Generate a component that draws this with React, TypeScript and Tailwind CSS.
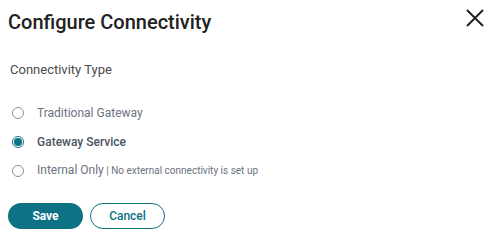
import React, { useState } from "react";

const options = [
  { id: "traditional", label: "Traditional Gateway" },
  { id: "service", label: "Gateway Service" },
  { id: "internal", label: "Internal Only", note: "No external connectivity is set up" },
];

const Radio: React.FC<{ checked: boolean }> = ({ checked }) => (
  <span
    className={`flex h-[12px] w-[12px] shrink-0 items-center justify-center rounded-full border ${
      checked ? "border-[#0e7285]" : "border-[#8a8f96]"
    }`}
  >
    {checked && <span className="h-[8px] w-[8px] rounded-full bg-[#0e7285]" />}
  </span>
);

const App: React.FC = () => {
  const [selected, setSelected] = useState("service");

  return (
    <div className="h-[236px] w-[500px] bg-white font-['Roboto',sans-serif]">
      {/* Header */}
      <div className="flex items-start justify-between pl-[8px] pr-[14px] pt-[9px]">
        <h1 className="text-[20px] font-medium leading-[26px] text-[#222222]">Configure Connectivity</h1>
        <button className="mt-[-2px] text-[#222222]">
          <svg width="22" height="22" viewBox="0 0 22 22" fill="none" stroke="currentColor" strokeWidth={2}>
            <path d="M3 3L19 19M19 3L3 19" />
          </svg>
        </button>
      </div>

      {/* Connectivity type */}
      <div className="pl-[10px] pt-[27px] text-[13px] leading-[16px] text-[#4a4a4a]">Connectivity Type</div>

      <div className="mt-[26px] flex flex-col gap-[12px] pl-[12px]">
        {options.map((opt) => (
          <label
            key={opt.id}
            className="flex h-[17px] cursor-pointer items-center gap-[13px]"
            onClick={() => setSelected(opt.id)}
          >
            <Radio checked={selected === opt.id} />
            <span
              className={`text-[12px] leading-[16px] ${
                selected === opt.id ? "font-medium text-[#4b5563]" : "text-[#6b7280]"
              }`}
            >
              {opt.label}
              {opt.note && <span className="text-[10px] text-[#6b7280]"> | {opt.note}</span>}
            </span>
          </label>
        ))}
      </div>

      {/* Actions */}
      <div className="mt-[24px] flex gap-[7px] pl-[8px]">
        <button className="h-[26px] w-[75px] rounded-full bg-[#0e7285] text-[12px] font-bold text-white">Save</button>
        <button className="h-[26px] w-[75px] rounded-full border border-[#0e7285] text-[12px] font-medium text-[#0e7285]">
          Cancel
        </button>
      </div>
    </div>
  );
};

export default App;
